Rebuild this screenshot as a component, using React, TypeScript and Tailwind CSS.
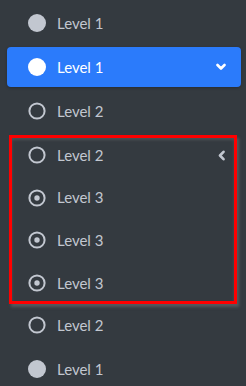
import React from "react";

type Kind = "filled" | "ring" | "dot";

function Icon({ kind, active }: { kind: Kind; active?: boolean }) {
  const c = active ? "#ffffff" : "#c2c7d0";
  return (
    <span className="w-[28px] h-[18px] flex items-center justify-center shrink-0">
      <svg width="18" height="18" viewBox="0 0 18 18">
        {kind === "filled" && <circle cx="9" cy="9" r="9" fill={c} />}
        {kind === "ring" && <circle cx="9" cy="9" r="7.6" fill="none" stroke={c} strokeWidth="2" />}
        {kind === "dot" && (
          <>
            <circle cx="9" cy="9" r="7.6" fill="none" stroke={c} strokeWidth="2" />
            <circle cx="9" cy="9" r="2.7" fill={c} />
          </>
        )}
      </svg>
    </span>
  );
}

function Item({
  label,
  kind,
  active,
  chevron,
  mb = "mb-1",
}: {
  label: string;
  kind: Kind;
  active?: boolean;
  chevron?: "down" | "left";
  mb?: string;
}) {
  return (
    <div
      className={`${mb} h-10 flex items-center pl-4 pr-4 rounded-[4px] ${
        active ? "bg-[#2b7bfb] text-white shadow-[0_1px_3px_rgba(0,0,0,0.25)]" : "text-[#c2c7d0]"
      }`}
    >
      <Icon kind={kind} active={active} />
      <span className="ml-[6px] text-[15px] leading-none flex-1">{label}</span>
      {chevron === "down" && (
        <svg width="10" height="8" viewBox="0 0 10 8" className="mr-[-1px]">
          <polyline points="1.5,2 5,5.5 8.5,2" fill="none" stroke="#ffffff" strokeWidth="2.6" strokeLinecap="round" strokeLinejoin="round" />
        </svg>
      )}
      {chevron === "left" && (
        <svg width="8" height="11" viewBox="0 0 8 11" className="mr-[-1px]">
          <polyline points="5.5,1.8 2,5.5 5.5,9.2" fill="none" stroke="#c2c7d0" strokeWidth="2.6" strokeLinecap="round" strokeLinejoin="round" />
        </svg>
      )}
    </div>
  );
}

export default function App() {
  return (
    <div
      className="w-[246px] h-[386px] bg-[#343a40] overflow-hidden pt-[3px] pl-[7px] pr-[5px]"
      style={{ fontFamily: "Lato, 'Noto Sans', sans-serif" }}
    >
      <Item label="Level 1" kind="filled" />
      <Item label="Level 1" kind="filled" active chevron="down" />
      <Item label="Level 2" kind="ring" />
      <div className="relative mb-[2px]">
        <Item label="Level 2" kind="ring" chevron="left" mb="mb-[2.7px]" />
        <Item label="Level 3" kind="dot" mb="mb-[2.7px]" />
        <Item label="Level 3" kind="dot" mb="mb-[2.7px]" />
        <Item label="Level 3" kind="dot" mb="mb-0" />
        <div className="absolute left-[2px] right-[4px] top-0 bottom-[-1px] border-[3px] border-[#ff0000] shadow-[2px_3px_3px_rgba(150,150,150,0.35),inset_0_2px_3px_rgba(150,150,150,0.25)] pointer-events-none" />
      </div>
      <Item label="Level 2" kind="ring" />
      <Item label="Level 1" kind="filled" />
    </div>
  );
}
